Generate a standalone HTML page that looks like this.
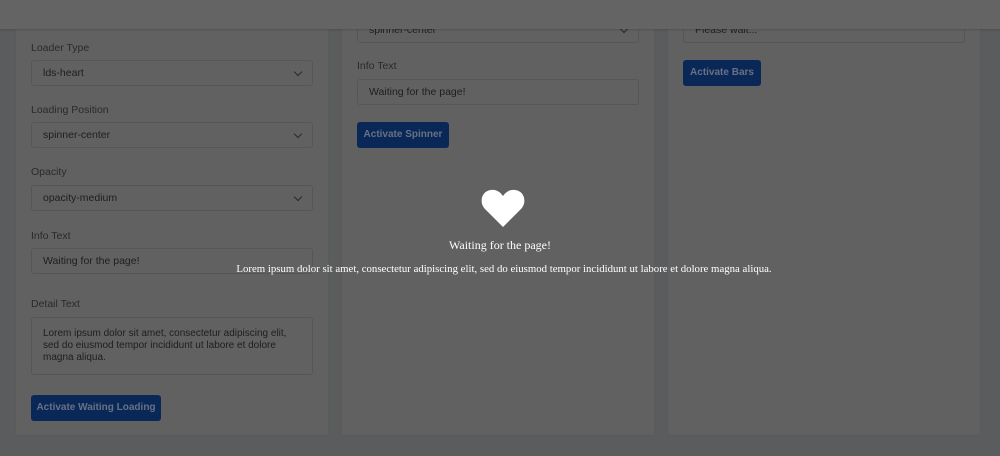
<!DOCTYPE html><html><head><style>
body{margin:0;width:1000px;height:456px;background:#5b5c5e;position:relative;overflow:hidden;font-family:"Liberation Sans",sans-serif}
.card{position:absolute;top:0;height:436px;background:#616161;border:1px solid #5a5a5a;box-sizing:border-box;border-radius:3px}
.l{position:absolute;font-size:10.5px;color:#2a2a2a}
.f{position:absolute;height:26px;box-sizing:border-box;border:1px solid #565656;border-radius:3px;font-size:10.5px;color:#1e1e1e;padding:0 11px;line-height:24px}
.f.s::after{content:"";position:absolute;right:11px;top:8px;width:5px;height:5px;border-right:1.3px solid #2a2a2a;border-bottom:1.3px solid #2a2a2a;transform:rotate(45deg)}
.b{position:absolute;height:26px;background:#092858;border-radius:3px;color:#687184;font-size:10px;font-weight:bold;line-height:26px;text-align:center;box-sizing:border-box}
.hd{position:absolute;left:0;top:0;width:1000px;height:29px;background:#646464;box-shadow:0 1px 2px rgba(0,0,0,.15)}
.o{position:absolute;left:0;width:1000px;text-align:center;color:#fff;font-family:"Liberation Serif",serif}
</style></head><body>
<div class="card" style="left:15px;width:314px"></div>
<div class="card" style="left:341px;width:314px"></div>
<div class="card" style="left:667px;width:314px"></div>
<div class="l" style="left:31px;top:42px">Loader Type</div>
<div class="f s" style="left:31px;top:60px;width:282px">lds-heart</div>
<div class="l" style="left:31px;top:104px">Loading Position</div>
<div class="f s" style="left:31px;top:122px;width:282px">spinner-center</div>
<div class="l" style="left:31px;top:166px">Opacity</div>
<div class="f s" style="left:31px;top:185px;width:282px">opacity-medium</div>
<div class="l" style="left:31px;top:230px">Info Text</div>
<div class="f" style="left:31px;top:248px;width:282px">Waiting for the page!</div>
<div class="l" style="left:31px;top:298px">Detail Text</div>
<div class="f" style="left:31px;top:317px;width:282px;height:58px;line-height:12px;padding-top:10px;font-size:10px">Lorem ipsum dolor sit amet, consectetur adipiscing elit, sed do eiusmod tempor incididunt ut labore et dolore magna aliqua.</div>
<div class="b" style="left:31px;top:395px;width:130px">Activate Waiting Loading</div>
<div class="f s" style="left:357px;top:17px;width:282px">spinner-center</div>
<div class="l" style="left:357px;top:60px">Info Text</div>
<div class="f" style="left:357px;top:79px;width:282px">Waiting for the page!</div>
<div class="b" style="left:357px;top:122px;width:92px">Activate Spinner</div>
<div class="f" style="left:683px;top:17px;width:282px">Please wait...</div>
<div class="b" style="left:683px;top:60px;width:78px">Activate Bars</div>
<div class="hd"></div>
<svg style="position:absolute;left:481px;top:189px" width="44" height="38" viewBox="0 0 44 38"><path d="M22 38 L4 20 C-2 14 0 2 10 1 C16 0 20 4 22 7 C24 4 28 0 34 1 C44 2 46 14 40 20 Z" fill="#fff"/></svg>
<div class="o" style="top:238px;font-size:12px">Waiting for the page!</div>
<div class="o" style="top:263px;font-size:10.8px;padding-left:8px;box-sizing:border-box">Lorem ipsum dolor sit amet, consectetur adipiscing elit, sed do eiusmod tempor incididunt ut labore et dolore magna aliqua.</div>
</body></html>
